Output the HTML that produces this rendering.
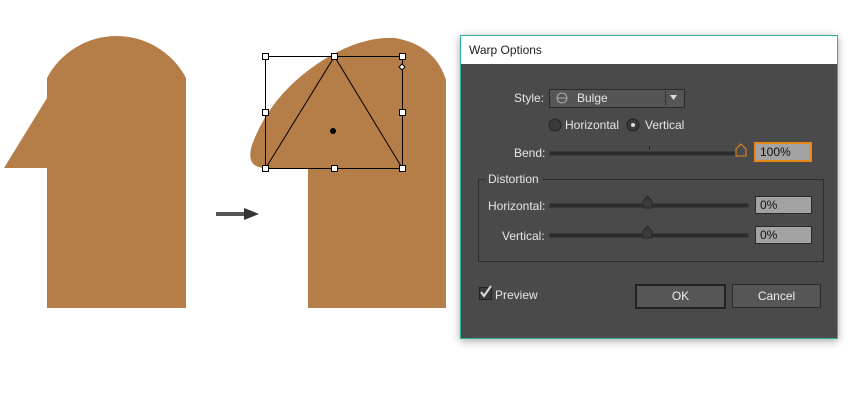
<!DOCTYPE html>
<html><head><style>
body{margin:0;width:850px;height:420px;background:#fff;position:relative;overflow:hidden;font-family:"Liberation Sans",sans-serif;}
.a{position:absolute;}
.dlg{left:460px;top:35px;width:376px;height:302px;background:#4a4a4a;border:1px solid #2ab39a;box-shadow:0 2px 8px rgba(0,0,0,.35);}
.title{left:0;top:0;width:376px;height:28px;background:#fff;color:#222;font-size:12px;line-height:28px;padding-left:8px;box-sizing:border-box;}
.lbl{color:#e6e6e6;font-size:12px;}
.track{height:3px;background:#2c2c2c;border:1px solid #3a3a3a;}
.inp{background:#a3a3a3;border:1px solid #2a2a2a;color:#111;font-size:12px;line-height:16px;padding-left:4px;box-sizing:border-box;}
.btn{border:1px solid #2a2a2a;background:#565656;color:#eee;font-size:12px;text-align:center;box-sizing:border-box;}
</style></head><body>
<svg class="a" style="left:0;top:0" width="850" height="420">
<path d="M47 308 L47 168 L4 168 L47 98 L47 78 A78.5 78.5 0 0 1 186 78 L186 308 Z" fill="#b57d48"/>
<path d="M308 308 L308 168 L266 168 Q245 168 252 145 Q270 95 320 62 Q360 36 395 38 Q435 45 446 80 L446 308 Z" fill="#b57d48"/>
<rect x="265.5" y="56.5" width="137" height="112" fill="none" stroke="#000"/>
<path d="M265.5 168.5 L334.5 56.5 L402.5 168.5" fill="none" stroke="#000" stroke-width="1"/>
<circle cx="333" cy="131" r="3" fill="#000"/>
<g fill="#fff" stroke="#000">
<rect x="262.5" y="53.5" width="6" height="6"/><rect x="331.5" y="53.5" width="6" height="6"/><rect x="399.5" y="53.5" width="6" height="6"/>
<rect x="262.5" y="109.5" width="6" height="6"/><rect x="399.5" y="109.5" width="6" height="6"/>
<rect x="262.5" y="165.5" width="6" height="6"/><rect x="331.5" y="165.5" width="6" height="6"/><rect x="399.5" y="165.5" width="6" height="6"/>
<path d="M402 64 L405 67 L402 70 L399 67 Z"/>
</g>
<path d="M216 214 L246 214" stroke="#555" stroke-width="4"/>
<path d="M244 208 L259 214 L244 220 Z" fill="#333"/>
</svg>
<div class="a dlg">
<div class="a title">Warp Options</div>
<div class="a lbl" style="left:53px;top:55px">Style:</div>
<div class="a" style="left:88px;top:53px;width:134px;height:17px;background:#555;border:1px solid #2a2a2a;"></div>
<svg class="a" style="left:95px;top:56px" width="14" height="14"><circle cx="6" cy="6" r="5" fill="none" stroke="#aaa"/><line x1="1" y1="6" x2="11" y2="6" stroke="#aaa"/></svg>
<div class="a lbl" style="left:116px;top:55px">Bulge</div>
<div class="a" style="left:204px;top:55px;width:1px;height:14px;background:#333"></div>
<svg class="a" style="left:208px;top:58px" width="10" height="8"><path d="M1 1 L8 1 L4.5 6 Z" fill="#ddd"/></svg>
<svg class="a" style="left:87px;top:82px" width="14" height="14"><circle cx="7" cy="7" r="6" fill="#3a3a3a" stroke="#222"/></svg>
<div class="a lbl" style="left:104px;top:82px">Horizontal</div>
<svg class="a" style="left:165px;top:82px" width="14" height="14"><circle cx="7" cy="7" r="6" fill="#3a3a3a" stroke="#222"/><circle cx="7" cy="7" r="2" fill="#ddd"/></svg>
<div class="a lbl" style="left:184px;top:82px">Vertical</div>
<div class="a lbl" style="left:53px;top:110px">Bend:</div>
<div class="a track" style="left:88px;top:115px;width:188px"></div>
<div class="a" style="left:188px;top:110px;width:1px;height:4px;background:#222"></div>
<svg class="a" style="left:274px;top:107px" width="12" height="14"><path d="M1 13 L1 6 L6 1 L11 6 L11 13 Z" fill="#4a4a4a" stroke="#e88a1a"/></svg>
<div class="a inp" style="left:293px;top:106px;width:58px;height:20px;border:2px solid #e88a1a;line-height:16px">100%</div>
<div class="a" style="left:17px;top:143px;width:344px;height:81px;border:1px solid #2e2e2e;"></div>
<div class="a lbl" style="left:24px;top:136px;background:#4a4a4a;padding:0 3px">Distortion</div>
<div class="a lbl" style="left:27px;top:163px">Horizontal:</div>
<div class="a track" style="left:88px;top:167px;width:198px"></div>
<svg class="a" style="left:181px;top:159px" width="12" height="14"><path d="M1 13 L1 6 L5.5 1 L10 6 L10 13 Z" fill="#3a3a3a" stroke="#2a2a2a"/></svg>
<div class="a inp" style="left:294px;top:160px;width:57px;height:18px">0%</div>
<div class="a lbl" style="left:41px;top:193px">Vertical:</div>
<div class="a track" style="left:88px;top:197px;width:198px"></div>
<svg class="a" style="left:181px;top:189px" width="12" height="14"><path d="M1 13 L1 6 L5.5 1 L10 6 L10 13 Z" fill="#3a3a3a" stroke="#2a2a2a"/></svg>
<div class="a inp" style="left:294px;top:190px;width:57px;height:18px">0%</div>
<div class="a" style="left:18px;top:251px;width:13px;height:13px;background:#3a3a3a;border:1px solid #222;box-sizing:border-box"></div>
<svg class="a" style="left:18px;top:249px" width="14" height="14"><path d="M2 7 L5 11 L12 1" fill="none" stroke="#ddd" stroke-width="2"/></svg>
<div class="a lbl" style="left:34px;top:252px">Preview</div>
<div class="a btn" style="left:174px;top:248px;width:91px;height:25px;line-height:21px;border:2px solid #222">OK</div>
<div class="a btn" style="left:271px;top:248px;width:89px;height:24px;line-height:22px">Cancel</div>
</div>
</body></html>
